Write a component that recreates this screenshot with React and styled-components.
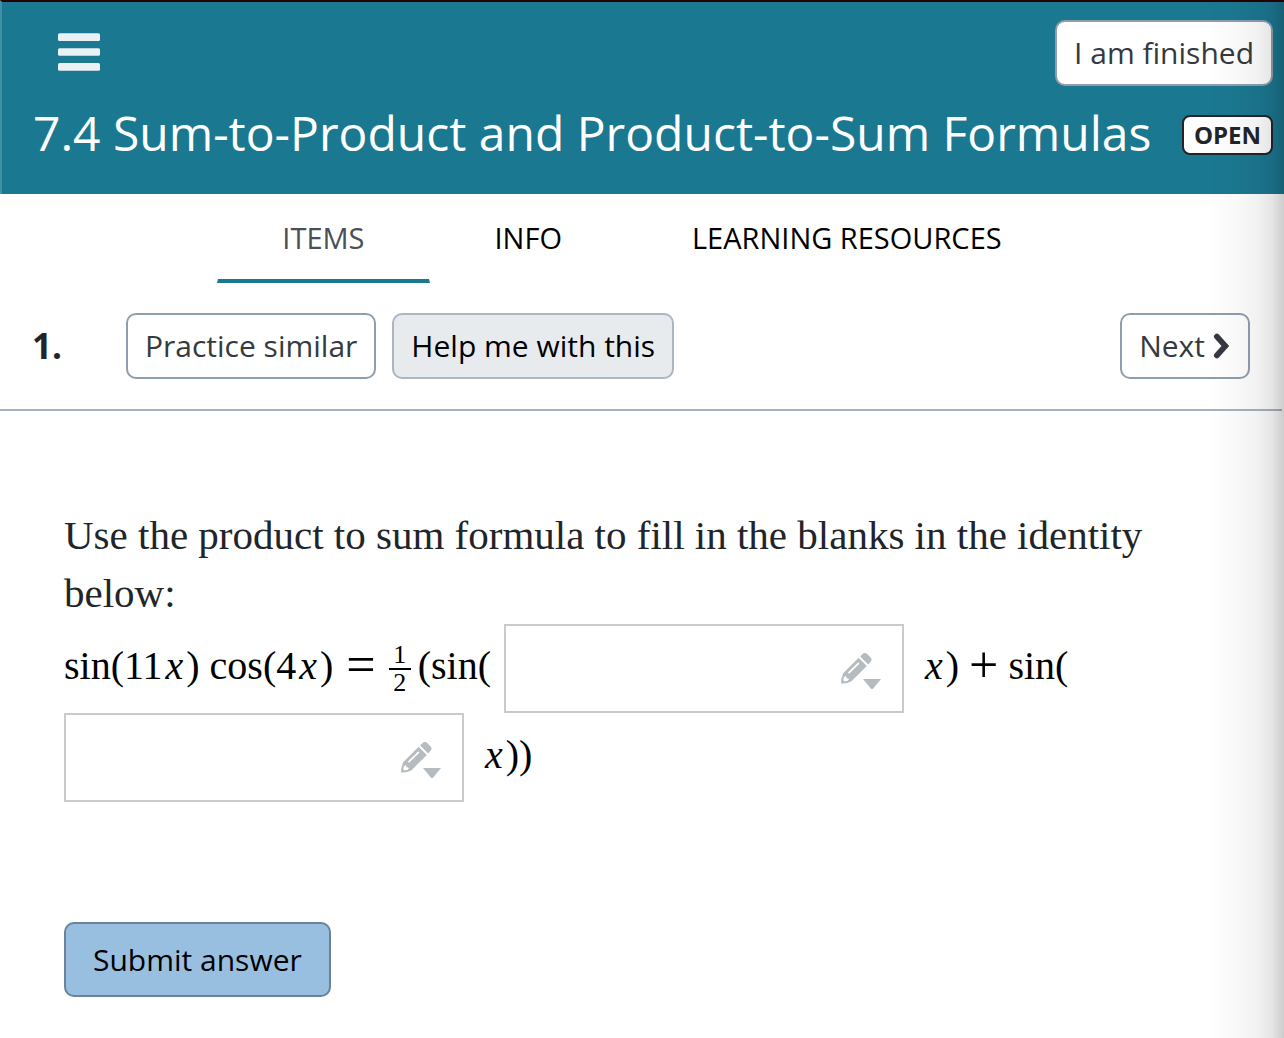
import React from "react";
import styled, { createGlobalStyle } from "styled-components";

const GlobalStyle = createGlobalStyle`
  * { box-sizing: border-box; }
  body {
    margin: 0;
    background: #ffffff;
    color: #212529;
    font-family: "Open Sans", "Noto Sans", sans-serif;
  }
  button, input { font: inherit; color: inherit; }
  button { cursor: pointer; }
`;

const Page = styled.div`
  position: relative;
  min-height: 100vh;
`;

const EdgeShade = styled.div`
  position: absolute;
  top: 2px;
  right: 0;
  bottom: 0;
  width: 80px;
  pointer-events: none;
  background: linear-gradient(
    to right,
    rgba(0, 0, 0, 0) 0%,
    rgba(0, 0, 0, 0.02) 35%,
    rgba(0, 0, 0, 0.05) 65%,
    rgba(0, 0, 0, 0.1) 85%,
    rgba(0, 0, 0, 0.2) 100%
  );
`;

const Header = styled.header`
  display: flex;
  flex-direction: column;
  gap: 16px;
  padding: 18px 11px 26px 31px;
  background: #1b7891;
  border-top: 2px solid #260003;
  border-left: 2px solid #4190a3;
`;

const HeaderRow = styled.div`
  display: flex;
  align-items: center;
  justify-content: space-between;
  min-height: 66px;
`;

const MenuButton = styled.button`
  display: flex;
  padding: 0 25px;
  border: 0;
  background: transparent;
`;

const Title = styled.h1`
  margin: 0;
  padding-bottom: 4px;
  color: #ffffff;
  font-size: 48px;
  font-weight: 400;
  line-height: 62px;
`;

const Badge = styled.span`
  padding: 0 10px;
  border: 2px solid #212529;
  border-radius: 8px;
  background: #ffffff;
  font-size: 24px;
  font-weight: 700;
  line-height: 36px;
`;

const Button = styled.button`
  display: inline-flex;
  align-items: center;
  gap: 8px;
  padding: 8px 17px;
  border: 2px solid ${(p) => (p.$filled ? "#abb6c2" : "#8f9ead")};
  border-radius: 10px;
  background: ${(p) => (p.$filled ? "#e8ebee" : "#ffffff")};
  color: ${(p) => (p.$filled ? "#000000" : "#343a40")};
  font-size: 30px;
  line-height: 46px;
  white-space: nowrap;
`;

const SubmitButton = styled(Button)`
  padding: 13px 27px 12px;
  border-color: #6c8296;
  background: #98bfdf;
  color: #000000;
`;

const Tabs = styled.nav`
  display: flex;
  justify-content: center;
`;

const Tab = styled.a`
  padding: 22px 64px 19px;
  border-bottom: 4px solid ${(p) => (p.$active ? "#1b7891" : "transparent")};
  border-left: 1px solid transparent;
  border-right: 1px solid transparent;
  color: ${(p) => (p.$active ? "#495057" : "#000000")};
  font-size: 29px;
  line-height: 44px;
  text-decoration: none;
`;

const QuestionBar = styled.div`
  display: flex;
  align-items: center;
  gap: 16px;
  margin-right: 2px;
  padding: 30px 32px;
  border-bottom: 2px solid #a8b2be;
`;

const QuestionNumber = styled.h2`
  width: 78px;
  margin: 0;
  font-size: 35px;
  font-weight: 700;
  line-height: 46px;
`;

const BarEnd = styled.div`
  margin-left: auto;
`;

const Question = styled.main`
  padding: 95px 64px 40px;
`;

const Prompt = styled.p`
  margin: 0;
  font-family: "Liberation Serif", serif;
  font-size: 41px;
  line-height: 58px;
`;

const Equation = styled.div`
  display: flex;
  flex-wrap: wrap;
  align-items: center;
  padding: 2px 0 120px;
`;

const MathText = styled.span`
  display: inline-flex;
  align-items: center;
  margin-right: ${(p) => (p.$beforeField ? "13px" : "0")};
  padding-bottom: 6px;
  color: #000000;
  font-family: "Liberation Serif", serif;
  font-size: 40px;
  line-height: 44px;
  white-space: pre;
`;

const Variable = styled.i`
  margin: 0 3px;
`;

const Operator = styled.span`
  margin: 0 ${(p) => (p.$wide ? "13px" : "10px")};
  padding-bottom: 2px;
  font-size: 52px;
`;

const Fraction = styled.span`
  display: inline-flex;
  flex-direction: column;
  align-items: center;
  margin: 6px 7px 0 0;
  font-size: 26px;
  line-height: 26px;
`;

const Numerator = styled.span`
  width: 22px;
  border-bottom: 2px solid #000000;
  text-align: center;
`;

const Field = styled.div`
  display: flex;
  align-items: center;
  width: 400px;
  height: 89px;
  margin-right: 18px;
  padding-right: 21px;
  border: 2px solid #cacaca;
  background: #ffffff;
`;

const AnswerInput = styled.input`
  flex: 1;
  min-width: 0;
  height: 100%;
  padding: 0 16px;
  border: 0;
  outline: 0;
  background: transparent;
`;

const PadButton = styled.button`
  display: flex;
  padding: 4px 0 0;
  border: 0;
  background: transparent;
`;

function MenuIcon() {
  return (
    <svg width="42" height="40" viewBox="0 0 42 40" fill="#e9f1f4" aria-hidden="true">
      <rect y="0.3" width="42" height="7.6" rx="1.5" />
      <rect y="15.2" width="42" height="7.6" rx="1.5" />
      <rect y="30.1" width="42" height="7.6" rx="1.5" />
    </svg>
  );
}

function ChevronIcon() {
  return (
    <svg width="18" height="26" viewBox="0 0 18 26" fill="none" aria-hidden="true">
      <path d="M3.8 3.5 12.4 13 3.8 22.5" stroke="#343a40" strokeWidth="5.6" strokeLinecap="round" strokeLinejoin="miter" />
    </svg>
  );
}

function PencilIcon() {
  return (
    <svg width="40" height="36" viewBox="0 0 40 36" aria-hidden="true">
      <g fill="#b5bbbe">
        <path d="M19.2 3.4 21.6 1a3.4 3.4 0 0 1 4.6.1l3.2 3.1a3.4 3.4 0 0 1 .2 4.6L27.2 11.4Z" />
        <path d="M17.6 4.8 25.8 13 10.2 28.4Q5 30.8 0 30.6 0 25.6 2 20.4Z" />
        <path d="M22 26h18l-7.6 9.2a1.8 1.8 0 0 1-2.8 0Z" />
      </g>
      <path d="M8 19.6 17.4 10.4" stroke="#fff" strokeWidth="1.8" strokeLinecap="round" />
      <path d="M2.8 24.4 4.6 22.8 5.6 25 8.2 26 6.6 27.8 3.6 28.4 2.2 27Z" fill="#fff" />
    </svg>
  );
}

function AnswerField({ label }) {
  return (
    <Field>
      <AnswerInput type="text" aria-label={label} />
      <PadButton type="button" aria-label="Open math keypad">
        <PencilIcon />
      </PadButton>
    </Field>
  );
}

export default function App() {
  return (
    <Page>
      <GlobalStyle />
      <Header>
        <HeaderRow>
          <MenuButton type="button" aria-label="Menu">
            <MenuIcon />
          </MenuButton>
          <Button type="button">I am finished</Button>
        </HeaderRow>
        <HeaderRow>
          <Title>7.4 Sum-to-Product and Product-to-Sum Formulas</Title>
          <Badge>OPEN</Badge>
        </HeaderRow>
      </Header>
      <Tabs>
        <Tab href="#items" $active aria-current="page">ITEMS</Tab>
        <Tab href="#info">INFO</Tab>
        <Tab href="#resources">LEARNING RESOURCES</Tab>
      </Tabs>
      <QuestionBar>
        <QuestionNumber>1.</QuestionNumber>
        <Button type="button">Practice similar</Button>
        <Button type="button" $filled>Help me with this</Button>
        <BarEnd>
          <Button type="button">
            Next
            <ChevronIcon />
          </Button>
        </BarEnd>
      </QuestionBar>
      <Question>
        <Prompt>
          Use the product to sum formula to fill in the blanks in the identity below:
        </Prompt>
        <Equation>
          <MathText $beforeField>
            sin(11<Variable>x</Variable>) cos(4<Variable>x</Variable>)
            <Operator $wide>=</Operator>
            <Fraction>
              <Numerator>1</Numerator>
              <span>2</span>
            </Fraction>
            (sin(
          </MathText>
          <AnswerField label="First blank" />
          <MathText>
            <Variable>x</Variable>)<Operator>+</Operator>sin(
          </MathText>
          <AnswerField label="Second blank" />
          <MathText>
            <Variable>x</Variable>))
          </MathText>
        </Equation>
        <SubmitButton type="button">Submit answer</SubmitButton>
      </Question>
      <EdgeShade />
    </Page>
  );
}
